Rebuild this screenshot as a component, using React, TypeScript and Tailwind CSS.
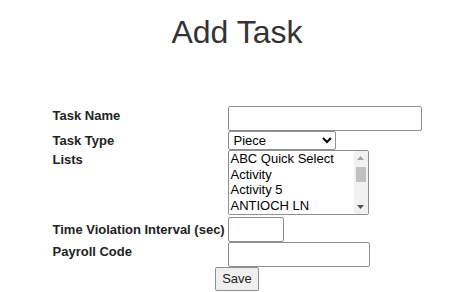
import { useState } from "react";

const LIST_OPTIONS = [
  "ABC Quick Select",
  "Activity",
  "Activity 5",
  "ANTIOCH LN",
  "Apple Harvest",
  "Box Count",
  "Cherry Pick",
  "Hourly",
  "Pruning",
];

const labelClass = "pt-[2px] text-[13px] leading-[15px] font-bold text-[#222]";
const inputClass =
  "block h-[25px] rounded-[2px] border border-[#8f8f8f] bg-white px-[2px] text-[13px] text-black outline-none";

function ListBox({ options }: { options: string[] }) {
  const [selected, setSelected] = useState<string[]>([]);

  const toggle = (option: string) => {
    setSelected((current) =>
      current.includes(option)
        ? current.filter((item) => item !== option)
        : [...current, option]
    );
  };

  return (
    <div
      role="listbox"
      aria-multiselectable="true"
      className="flex h-[65px] w-[141px] overflow-hidden rounded-[2px] border border-[#8f8f8f] bg-white"
    >
      <ul className="min-w-0 flex-1 text-[13px] leading-[15.5px] text-black">
        {options.slice(0, 4).map((option) => (
          <li
            key={option}
            role="option"
            aria-selected={selected.includes(option)}
            onClick={() => toggle(option)}
            className={`truncate px-[2px] ${
              selected.includes(option) ? "bg-[#cecece]" : ""
            }`}
          >
            {option}
          </li>
        ))}
      </ul>
      <div className="flex w-[14px] flex-col bg-[#f1f1f1]">
        <div className="flex h-[14px] items-center justify-center">
          <svg width="7" height="4" viewBox="0 0 7 4">
            <path d="M0 4 L3.5 0 L7 4 Z" fill="#a3a3a3" />
          </svg>
        </div>
        <div className="flex-1 px-[2px]">
          <div className="mt-[2px] h-[15px] bg-[#c1c1c1]" />
        </div>
        <div className="flex h-[14px] items-center justify-center">
          <svg width="7" height="4" viewBox="0 0 7 4">
            <path d="M0 0 L7 0 L3.5 4 Z" fill="#505050" />
          </svg>
        </div>
      </div>
    </div>
  );
}

export default function App() {
  const [taskName, setTaskName] = useState("");
  const [taskType, setTaskType] = useState("Piece");
  const [interval, setInterval] = useState("");
  const [payrollCode, setPayrollCode] = useState("");

  return (
    <div className="min-h-[292px] w-[474px] bg-white font-['Liberation_Sans',Arial,sans-serif]">
      <h1 className="pt-[14px] text-center text-[32px] leading-[36px] font-normal text-[#333]">
        Add Task
      </h1>

      <form
        className="mx-auto mt-[56px] grid w-[369px] grid-cols-[175px_194px]"
        onSubmit={(e) => e.preventDefault()}
      >
        <label className={`${labelClass} h-[25px]`}>Task Name</label>
        <input
          className={`${inputClass} w-[194px]`}
          value={taskName}
          onChange={(e) => setTaskName(e.target.value)}
        />

        <label className={`${labelClass} h-[19px]`}>Task Type</label>
        <select
          className="block h-[19px] w-[108px] rounded-[2px] border border-[#8f8f8f] bg-white pl-[1px] text-[13px] leading-[15px] text-black"
          value={taskType}
          onChange={(e) => setTaskType(e.target.value)}
        >
          <option>Piece</option>
          <option>Hourly</option>
          <option>Salary</option>
        </select>

        <label className={labelClass}>Lists</label>
        <ListBox options={LIST_OPTIONS} />

        <label
          className={`${labelClass} mt-[2px] pt-[5px] text-[13.2px] whitespace-nowrap`}
        >
          Time Violation Interval (sec)
        </label>
        <input
          className={`${inputClass} mt-[2px] w-[56px]`}
          value={interval}
          onChange={(e) => setInterval(e.target.value)}
        />

        <label className={labelClass}>Payroll Code</label>
        <input
          className={`${inputClass} w-[142px]`}
          value={payrollCode}
          onChange={(e) => setPayrollCode(e.target.value)}
        />

        <div className="col-span-2 flex justify-center">
          <button
            type="submit"
            className="h-[24px] w-[44px] rounded-[2px] border border-[#8f8f8f] bg-[#efefef] text-[13px] text-[#222]"
          >
            Save
          </button>
        </div>
      </form>
    </div>
  );
}
